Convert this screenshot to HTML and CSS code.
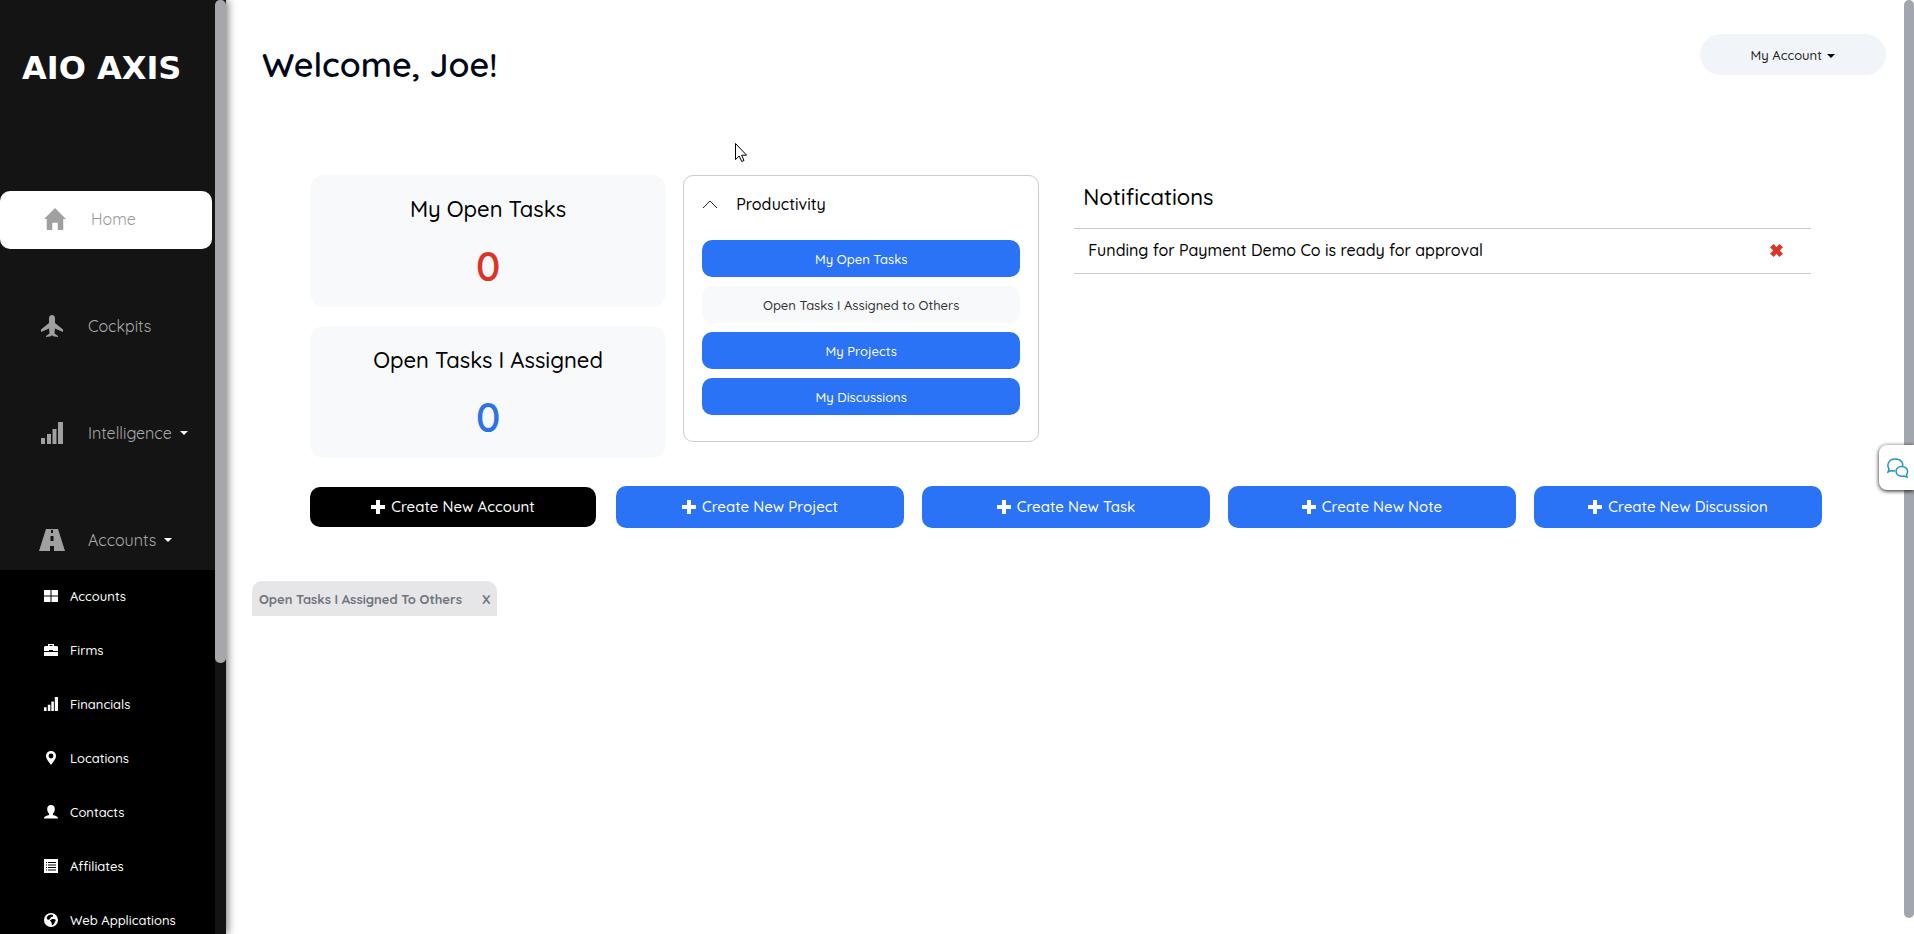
FILE: index.html
```html
<!DOCTYPE html>
<html lang="en">

<head>
    <meta charset="utf-8">
    <meta name="viewport" content="width=device-width, initial-scale=1">
    <title>AIO Axis</title>

    <link rel="stylesheet" href="styles.css">
</head>

<body>

    <!-- Shared icons -->
    <svg class="sprite" aria-hidden="true">
        <symbol id="signal" viewBox="0 0 22 22">
            <path d="M0 16h4v6H0zM6 12h4v10H6zM11.500 7h4v15h-4zM17 0h5v22h-5z" />
        </symbol>
        <symbol id="plus" viewBox="0 0 14 14">
            <path d="M5 0h4v5h5v4H9v5H5V9H0V5h5z" />
        </symbol>
    </svg>

    <aside class="sidebar">
        <div class="sidebar-content">
            <a class="logo" href="#">AIO AXIS</a>
            <nav class="menu">
                <a class="menu-item active" href="#">
                    <svg class="menu-icon" viewBox="0 0 24 24"><path d="M12 0l12 12h-3v12h-6v-8H9v8H3V12H0z" /></svg>
                    Home
                </a>
                <a class="menu-item" href="#">
                    <svg class="menu-icon" viewBox="0 0 22 22"><path d="M11 0c1.800 0 3 1.400 3 3.500V8l8 6.500V17l-8-3.500-.5 5L17 21v1l-5-.8-1-1.200-1 1.200L5 22v-1l3.500-2.500-.5-5L0 17v-2.500L8 8V3.500C8 1.400 9.200 0 11 0z" /></svg>
                    Cockpits
                </a>
                <a class="menu-item" href="#">
                    <svg class="menu-icon"><use href="#signal" /></svg>
                    Intelligence <span class="caret"></span>
                </a>
                <a class="menu-item" href="#">
                    <svg class="menu-icon road" viewBox="0 0 26 22"><path fill-rule="evenodd" d="M7 0h12l7 22H15v-5h-4v5H0zM12 1v3h2V1zM11.500 7v5h3V7z" /></svg>
                    Accounts <span class="caret"></span>
                </a>
            </nav>
            <nav class="submenu">
                <a class="submenu-item" href="#">
                    <svg class="submenu-icon" viewBox="0 0 14 14"><path d="M0 1h6.500v5.500H0zM7.500 1H14v5.500H7.500zM0 7.500h6.500V13H0zM7.500 7.500H14V13H7.500z" /></svg>
                    Accounts
                </a>
                <a class="submenu-item" href="#">
                    <svg class="submenu-icon" viewBox="0 0 14 14"><path fill-rule="evenodd" d="M4 3V1h6v2h3l1 1v4H9V7H5v1H0V4l1-1zM5.500 3h3V2h-3zM0 9h14v4H0z" /></svg>
                    Firms
                </a>
                <a class="submenu-item" href="#">
                    <svg class="submenu-icon"><use href="#signal" /></svg>
                    Financials
                </a>
                <a class="submenu-item" href="#">
                    <svg class="submenu-icon" viewBox="0 0 14 14"><path fill-rule="evenodd" d="M7 0c3 0 5 2.200 5 5 0 3-3 6-5 9-2-3-5-6-5-9 0-2.800 2-5 5-5zm0 2.600a2.400 2.400 0 1 0 0 4.800 2.400 2.400 0 0 0 0-4.800z" /></svg>
                    Locations
                </a>
                <a class="submenu-item" href="#">
                    <svg class="submenu-icon" viewBox="0 0 14 14"><path d="M7 0c2.400 0 3.800 1.600 3.800 4 0 2-.8 3.600-1.800 4.500V10c2 .7 5 1.200 5 3.500H0C0 11.200 3 10.700 5 10V8.500C4 7.600 3.200 6 3.200 4 3.200 1.600 4.600 0 7 0z" /></svg>
                    Contacts
                </a>
                <a class="submenu-item" href="#">
                    <svg class="submenu-icon" viewBox="0 0 14 14"><path fill-rule="evenodd" d="M0 0h14v14H0zM2 3v1h1V3zM4 3v1h8V3zM2 5.500v1h1v-1zM4 5.500v1h8v-1zM2 8v1h1V8zM4 8v1h8V8zM2 10.500v1h1v-1zM4 10.500v1h8v-1z" /></svg>
                    Affiliates
                </a>
                <a class="submenu-item" href="#">
                    <svg class="submenu-icon" viewBox="0 0 14 14"><path fill-rule="evenodd" d="M7 0a7 7 0 1 1 0 14A7 7 0 0 1 7 0zM7 1.500L4 2.500 2.500 5l1.500 2 2-1 1-2 2-.5V2zM8 6L6 7.500l1.500 2 .5 3 2-1.500 1-2.500L12 7l-2-1z" /></svg>
                    Web Applications
                </a>
            </nav>
        </div>
        <div class="scrollbar"><div class="scrollbar-thumb sidebar-thumb"></div></div>
    </aside>

    <main class="main">
        <header class="header">
            <h1>Welcome, Joe!</h1>
            <button class="account-button" type="button">My Account <span class="caret"></span></button>
        </header>

        <div class="dashboard">
            <div class="counters">
                <section class="counter">
                    <h2>My Open Tasks</h2>
                    <p class="count count-red">0</p>
                </section>
                <section class="counter">
                    <h2>Open Tasks I Assigned</h2>
                    <p class="count count-blue">0</p>
                </section>
            </div>

            <section class="productivity">
                <h3>
                    <svg class="chevron" viewBox="0 0 16 9"><path d="M1 8l7-7 7 7" /></svg>
                    Productivity
                </h3>
                <button class="btn" type="button">My Open Tasks</button>
                <button class="btn btn-light" type="button">Open Tasks I Assigned to Others</button>
                <button class="btn" type="button">My Projects</button>
                <button class="btn" type="button">My Discussions</button>
            </section>

            <section class="notifications">
                <h2>Notifications</h2>
                <table>
                    <tr>
                        <td>Funding for Payment Demo Co is ready for approval</td>
                        <td class="dismiss">
                            <button type="button" aria-label="Dismiss">
                                <svg viewBox="0 0 14 14"><path d="M4 0l3 3.500L10 0l4 3.500L10.500 7l3.500 3.500-4 3.500-3-3.500L4 14 0 10.500 3.500 7 0 3.500z" /></svg>
                            </button>
                        </td>
                    </tr>
                </table>
            </section>
        </div>

        <div class="actions">
            <button class="action action-dark" type="button"><svg><use href="#plus" /></svg>Create New Account</button>
            <button class="action" type="button"><svg><use href="#plus" /></svg>Create New Project</button>
            <button class="action" type="button"><svg><use href="#plus" /></svg>Create New Task</button>
            <button class="action" type="button"><svg><use href="#plus" /></svg>Create New Note</button>
            <button class="action" type="button"><svg><use href="#plus" /></svg>Create New Discussion</button>
        </div>

        <div class="tabs">
            <div class="tab">
                Open Tasks I Assigned To Others
                <button type="button" aria-label="Close tab">X</button>
            </div>
        </div>
    </main>

    <div class="scrollbar page-scrollbar"><div class="scrollbar-thumb page-thumb"></div></div>

    <button class="chat" type="button" aria-label="Chat">
        <svg viewBox="0 0 22 20"><path d="M8 12.500c-1 .5-2.500.5-3.500 0L1 14l1-3C-.5 7 1.500 1 8 1s9 4.500 7 8" /><path d="M14.500 8.500c4 0 6.500 2.500 6 5.500-.1 1-.5 2-1 2.500l.5 2.500-3-1c-4 1-8-1-8-4.500 0-2.800 2.500-5 5.500-5z" /></svg>
    </button>

    <svg class="pointer" viewBox="0 0 12 19"><path d="M.5.5v16l3.700-3.500 2.500 5.500 2.300-1-2.400-5.300h5z" /></svg>

</body>

</html>
```
FILE: styles.css
```css
* {
    box-sizing: border-box;
}

body {
    display: flex;
    height: 100vh;
    margin: 0;
    overflow: hidden;
    background: #fff;
    color: #000;
    font-family: Quicksand, Lato, sans-serif;
    font-size: 16px;
    font-weight: 500;
    line-height: 20px;
}

h1,
h2,
h3,
p {
    margin: 0;
    font-weight: 500;
}

a {
    color: inherit;
    text-decoration: none;
}

button {
    border: 0;
    padding: 0;
    background: none;
    color: inherit;
    font: inherit;
    cursor: pointer;
}

svg {
    flex: none;
    fill: currentColor;
}

.sprite {
    position: absolute;
    width: 0;
    height: 0;
}

.caret {
    display: inline-block;
    border: 4px solid transparent;
    border-top: 4px solid;
    border-bottom: 0;
}

/**
 * Sidebar
 */
.sidebar {
    display: flex;
    flex: none;
    width: 226px;
    overflow: hidden;
    background: #141414;
    box-shadow: 2px 0 8px rgba(0, 0, 0, .5);
}

.sidebar-content {
    flex: 1;
}

.logo {
    display: block;
    height: 191px;
    padding: 48px 0 0 22px;
    color: #fff;
    font-family: "DejaVu Sans", sans-serif;
    font-size: 32px;
    font-weight: bold;
    line-height: 40px;
    white-space: nowrap;
}

.menu {
    display: flex;
    flex-direction: column;
    gap: 49px;
}

.menu-item {
    display: flex;
    align-items: center;
    height: 58px;
    padding: 0 0 2px 41px;
    color: #aaa;
    font-weight: 400;
}

.menu-item.active {
    margin-right: 3px;
    padding-left: 44px;
    border-radius: 10px;
    background: #fff;
    color: #999;
}

.menu-icon {
    width: 22px;
    height: 22px;
    margin-right: 25px;
    color: #a0a0a0;
}

.menu-icon.road {
    width: 26px;
    margin: 0 23px 0 -2px;
}

.menu-item .caret {
    margin-left: 8px;
    color: #fff;
}

.submenu {
    background: #000;
}

.submenu-item {
    display: flex;
    align-items: center;
    height: 54px;
    padding: 0 0 3px 44px;
    color: #fff;
    font-size: 13px;
    white-space: nowrap;
}

.submenu-icon {
    width: 14px;
    height: 14px;
    margin-right: 12px;
}

/**
 * Scrollbars
 */
.scrollbar {
    flex: none;
    width: 11px;
}

.scrollbar-thumb {
    border-radius: 5px;
    background: #a5a7aa;
}

.sidebar-thumb {
    height: 71%;
}

.page-scrollbar {
    width: 10px;
    padding-bottom: 16px;
}

.page-thumb {
    height: 100%;
    background: #a2a6ae;
}

/**
 * Main
 */
.main {
    flex: 1;
    min-width: 0;
}

.header {
    display: flex;
    align-items: flex-start;
    justify-content: space-between;
    height: 175px;
    padding: 34px 18px 0 36px;
}

h1 {
    color: #020817;
    font-size: 34px;
    font-weight: 600;
    line-height: 62px;
}

.account-button {
    width: 186px;
    height: 41px;
    border-radius: 21px;
    background: #f1f5f9;
    color: #222;
    font-size: 13px;
}

.account-button .caret {
    margin-left: 2px;
    color: #000;
    vertical-align: middle;
}

.dashboard {
    display: grid;
    grid-template-columns: 1fr 1fr 2.15fr;
    align-items: start;
    gap: 17px;
    margin: 0 82px 0 84px;
}

h2 {
    font-size: 22px;
    line-height: 28px;
}

.counters {
    display: grid;
    gap: 19px;
}

.counter {
    height: 132px;
    padding-top: 20px;
    border-radius: 14px;
    background: #f8f9fb;
    text-align: center;
}

.count {
    padding-top: 21px;
    font-size: 40px;
    font-weight: 600;
    line-height: 44px;
}

.count-red {
    color: #dc3527;
}

.count-blue {
    color: #2f72e8;
}

.productivity {
    display: flex;
    flex-direction: column;
    gap: 9px;
    height: 267px;
    padding: 18px;
    border: 1px solid #ccc;
    border-radius: 10px;
}

h3 {
    display: flex;
    align-items: center;
    margin-bottom: 17px;
    font-size: 16px;
}

.chevron {
    width: 16px;
    height: 9px;
    margin-right: 18px;
    fill: none;
    stroke: #222;
}

.btn {
    height: 37px;
    border-radius: 10px;
    background: #2b73f6;
    color: #fff;
    font-size: 13px;
}

.btn-light {
    background: #f8f9fb;
    color: #333;
}

.notifications {
    padding: 8px 11px 0 18px;
}

.notifications h2 {
    padding-left: 9px;
}

table {
    width: 100%;
    margin-top: 17px;
    border-collapse: collapse;
}

td {
    height: 45px;
    padding: 0 14px 2px;
    border: solid #c8cccf;
    border-width: 1px 0;
}

.dismiss {
    padding-right: 28px;
    color: #dc3527;
    line-height: 0;
    text-align: right;
}

.dismiss svg {
    display: block;
    width: 13px;
    height: 13px;
}

.actions {
    display: grid;
    grid-template-columns: repeat(5, 1fr);
    align-items: center;
    gap: 18px;
    margin: 28px 82px 53px 84px;
}

.action {
    display: flex;
    align-items: center;
    justify-content: center;
    height: 42px;
    border-radius: 10px;
    background: #2b73f6;
    color: #fff;
    font-size: 15px;
}

.action-dark {
    height: 40px;
    margin-right: 2px;
    background: #000;
}

.action svg {
    width: 14px;
    height: 14px;
    margin-right: 6px;
}

.tabs {
    display: flex;
    padding-left: 26px;
}

.tab {
    display: flex;
    align-items: center;
    gap: 20px;
    height: 35px;
    padding: 0 7px;
    border-radius: 10px 10px 0 0;
    background: #e6e6e8;
    color: #71747c;
    font-size: 13px;
    font-weight: bold;
}

/**
 * Floating bits
 */
.chat {
    position: absolute;
    top: 445px;
    right: 0;
    width: 35px;
    height: 45px;
    padding-left: 8px;
    border-radius: 8px 0 0 8px;
    background: #fff;
    box-shadow: 0 1px 4px rgba(0, 0, 0, .9);
}

.chat svg {
    display: block;
    width: 22px;
    height: 20px;
    fill: none;
    stroke: #2596be;
    stroke-width: 1.5;
}

.pointer {
    position: absolute;
    top: 143px;
    left: 735px;
    width: 12px;
    height: 19px;
    fill: #fff;
    stroke: #000;
}
```
